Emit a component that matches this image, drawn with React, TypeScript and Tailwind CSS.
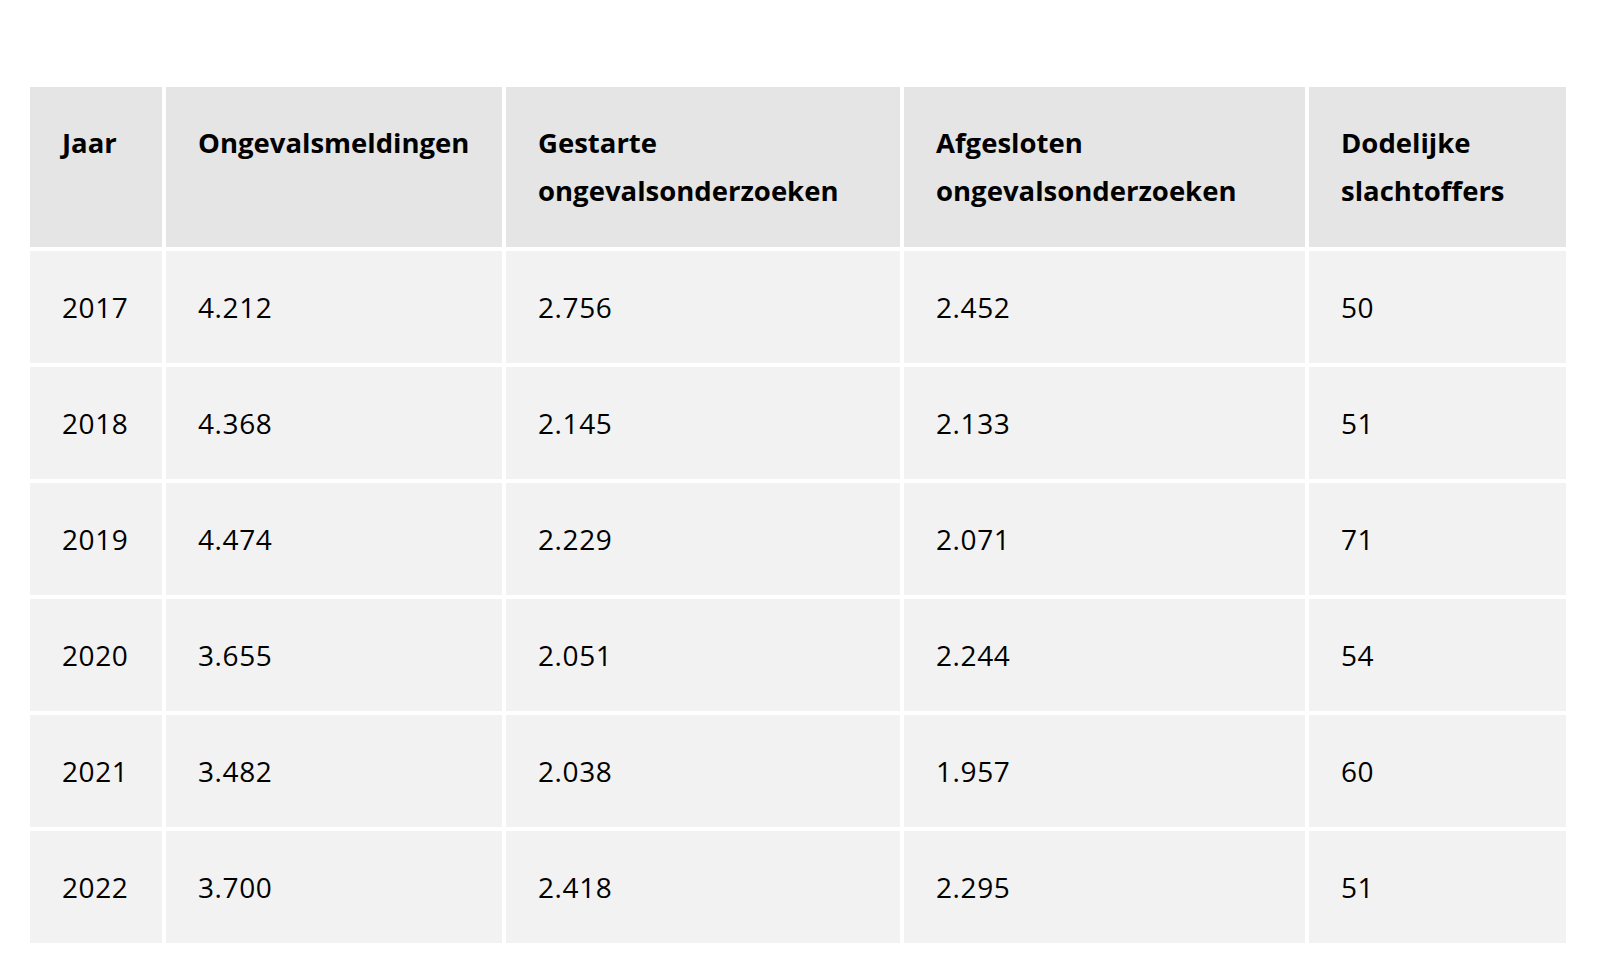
const headers = [
  "Jaar",
  "Ongevalsmeldingen",
  "Gestarte ongevalsonderzoeken",
  "Afgesloten ongevalsonderzoeken",
  "Dodelijke slachtoffers",
];

const rows = [
  ["2017", "4.212", "2.756", "2.452", "50"],
  ["2018", "4.368", "2.145", "2.133", "51"],
  ["2019", "4.474", "2.229", "2.071", "71"],
  ["2020", "3.655", "2.051", "2.244", "54"],
  ["2021", "3.482", "2.038", "1.957", "60"],
  ["2022", "3.700", "2.418", "2.295", "51"],
];

const widths = ["w-[132px]", "w-[336px]", "w-[394px]", "w-[401px]", "w-[257px]"];

export default function App() {
  return (
    <div
      className="min-h-screen bg-white pt-[83px] pl-[26px] text-black"
      style={{ fontFamily: "'Open Sans', 'Noto Sans', sans-serif" }}
    >
      <table className="table-fixed border-separate border-spacing-[4px] w-[1544px]">
        <colgroup>
          {widths.map((w, i) => (
            <col key={i} className={w} />
          ))}
        </colgroup>
        <thead>
          <tr>
            {headers.map((h) => (
              <th
                key={h}
                className="bg-[#e5e5e5] px-8 py-8 text-left align-top text-[27.5px] leading-[48px] font-bold"
              >
                {h}
              </th>
            ))}
          </tr>
        </thead>
        <tbody>
          {rows.map((r) => (
            <tr key={r[0]}>
              {r.map((c, i) => (
                <td
                  key={i}
                  className="bg-[#f2f2f2] px-8 py-8 text-left align-middle text-[28px] leading-[48px] tracking-[0.6px]"
                >
                  {c}
                </td>
              ))}
            </tr>
          ))}
        </tbody>
      </table>
    </div>
  );
}
